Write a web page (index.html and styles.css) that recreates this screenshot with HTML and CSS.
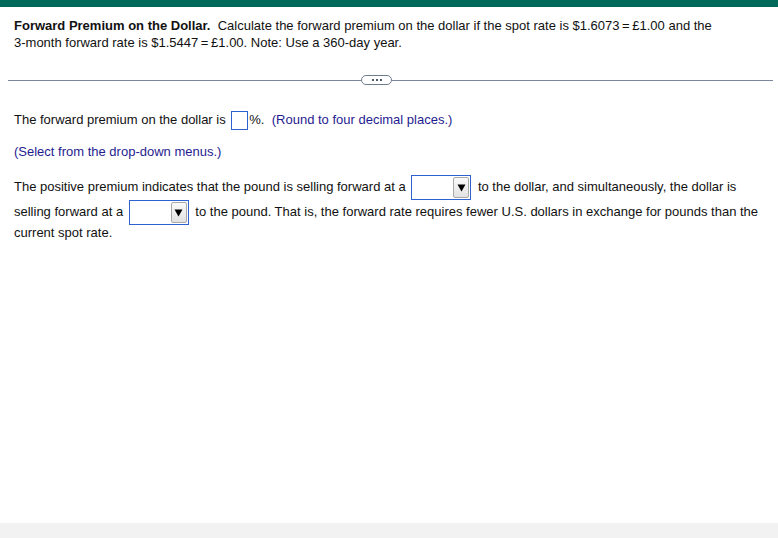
FILE: index.html
```html
<!DOCTYPE html>
<html>
<head>
<meta charset="utf-8">
<link rel="stylesheet" href="styles.css">
</head>
<body>
<div class="topbar"></div>
<div class="question">
  <p class="prompt"><b>Forward Premium on the Dollar.</b>&nbsp; Calculate the forward premium on the dollar if the spot rate is $1.6073&#8201;=&#8201;£1.00 and the 3-month forward rate is $1.5447&#8201;=&#8201;£1.00. Note: Use a 360-day year.</p>
</div>
<div class="divider">
  <div class="rule left"></div>
  <div class="pill"><span></span><span></span><span></span></div>
  <div class="rule"></div>
</div>
<div class="answer">
  <p class="line1">The forward premium on the dollar is <span class="inbox"></span>%.&nbsp; <span class="hint">(Round to four decimal places.)</span></p>
  <p class="hint line2">(Select from the drop-down menus.)</p>
  <p class="para">The positive premium indicates that the pound is selling forward at a <span class="dd"><span class="ddbtn"><svg width="9" height="9" viewBox="0 0 9 9"><path d="M0.5 1.5 H8.5 L4.5 8.5 Z" fill="#000"/></svg></span></span> to the dollar, and simultaneously, the dollar is selling forward at a <span class="dd"><span class="ddbtn"><svg width="9" height="9" viewBox="0 0 9 9"><path d="M0.5 1.5 H8.5 L4.5 8.5 Z" fill="#000"/></svg></span></span> to the pound. That is, the forward rate requires fewer U.S. dollars in exchange for pounds than the current spot rate.</p>
</div>
<div class="footer"></div>
</body>
</html>
```
FILE: styles.css
```css
html, body {
  margin: 0;
  padding: 0;
  background: #fff;
}
body {
  font-family: "Liberation Sans", Arial, sans-serif;
  font-size: 13px;
  color: #111;
  height: 538px;
  position: relative;
  overflow: hidden;
}
.topbar {
  height: 7px;
  background: #00695a;
}
.question {
  padding: 10px 14px 0 14px;
}
.prompt {
  margin: 0;
  line-height: 17px;
  width: 705px;
}
.divider {
  display: flex;
  align-items: center;
  margin: 24px 5px 0 8px;
  height: 10px;
}
.rule {
  flex: 1;
  height: 1px;
  background: #7b8798;
}
.rule.left {
  flex: 0 0 353px;
}
.pill {
  width: 29px;
  height: 8px;
  border: 1px solid #6f7d8e;
  border-radius: 5px;
  display: flex;
  justify-content: center;
  align-items: center;
  gap: 2px;
  background: #fff;
}
.pill span {
  width: 2px;
  height: 2px;
  background: #4c5a6a;
}
.answer {
  padding: 0 14px;
}
.line1 {
  margin: 25px 0 0 0;
  line-height: 20px;
  display: flex;
  align-items: center;
  white-space: pre;
}
.inbox {
  display: inline-block;
  width: 15px;
  height: 17px;
  border: 1px solid #2f62d0;
  margin: 0 1px 0 2px;
}
.hint {
  color: #1f1c8f;
}
.line2 {
  margin: 14px 0 0 0;
  line-height: 16px;
}
.para {
  margin: 15px 0 0 0;
  line-height: 16px;
  width: 750px;
}
.dd {
  display: inline-block;
  vertical-align: middle;
  width: 58px;
  height: 23px;
  border: 1px solid #2f62d0;
  background: #fff;
  position: relative;
  margin: 0 3px 0 2px;
}
.ddbtn {
  position: absolute;
  right: 1px;
  top: 1px;
  width: 14px;
  height: 19px;
  border: 1px solid #a8a8a8;
  border-radius: 2px;
  background: linear-gradient(#fafafa, #e2e2e2);
  display: flex;
  align-items: center;
  justify-content: center;
}
.footer {
  position: absolute;
  left: 0;
  right: 0;
  bottom: 0;
  height: 15px;
  background: #f2f2f2;
}
```
